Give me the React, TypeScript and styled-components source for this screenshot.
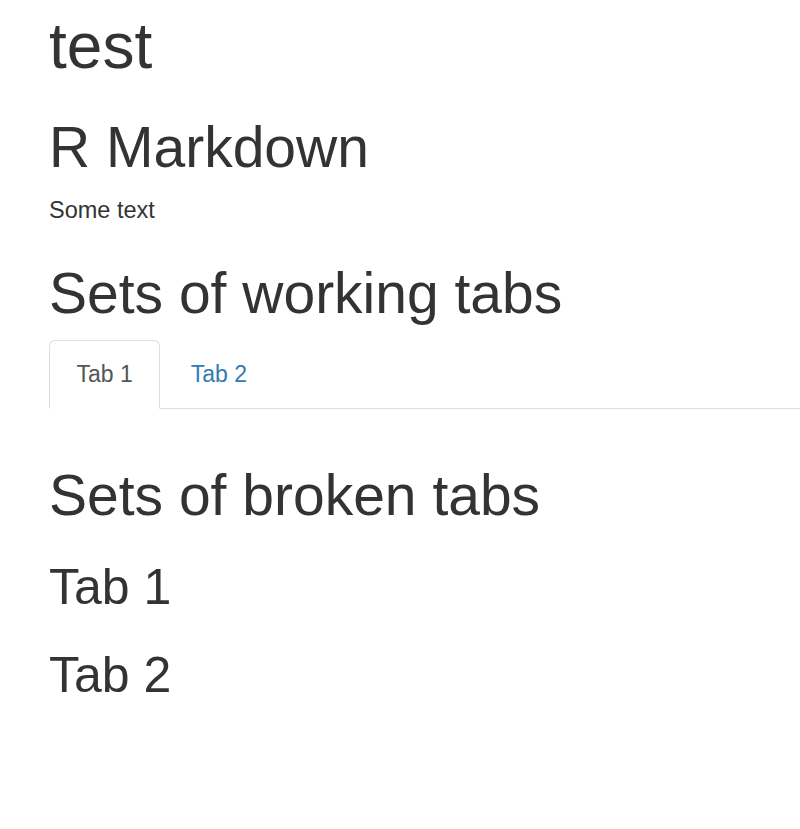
import styled, { createGlobalStyle } from "styled-components";

const GlobalStyle = createGlobalStyle`
  html, body {
    margin: 0;
    padding: 0;
    background: #fff;
  }

  body {
    font-family: "Liberation Sans", Arial, Helvetica, sans-serif;
    color: #333;
  }
`;

const Page = styled.main`
  display: flex;
  flex-direction: column;
  padding: 11px 0 0 49px;
`;

const Title = styled.h1`
  margin: 0;
  font-size: 64px;
  line-height: 70px;
  font-weight: 400;
`;

const SectionTitle = styled.h2<{ $gap: number }>`
  margin: ${(p) => p.$gap}px 0 0;
  font-size: 57px;
  line-height: 63px;
  font-weight: 400;
`;

const SubTitle = styled.h3`
  margin: 32px 0 0;
  font-size: 50px;
  line-height: 56px;
  font-weight: 400;
`;

const Paragraph = styled.p`
  margin: 15px 0 0;
  font-size: 23.5px;
  line-height: 33px;
`;

const TabList = styled.ul`
  display: flex;
  margin: 15px 0 0;
  padding: 0;
  list-style: none;
  border-bottom: 1px solid #ddd;
`;

const TabItem = styled.li`
  margin: 0 3px -1px 0;
`;

const TabLink = styled.a<{ $active?: boolean }>`
  display: block;
  padding: 17px 26.5px;
  font-size: 23px;
  line-height: 33px;
  text-decoration: none;
  cursor: pointer;
  border: 1px solid ${(p) => (p.$active ? "#ddd" : "transparent")};
  border-bottom-color: ${(p) => (p.$active ? "#fff" : "transparent")};
  border-radius: 6px 6px 0 0;
  background: ${(p) => (p.$active ? "#fff" : "transparent")};
  color: ${(p) => (p.$active ? "#555" : "#337ab7")};
`;

const App = () => {
  const tabs = [
    { title: "Tab 1", active: true },
    { title: "Tab 2", active: false },
  ];

  return (
    <>
      <GlobalStyle />
      <Page>
        <Title>test</Title>

        <SectionTitle $gap={35}>R Markdown</SectionTitle>
        <Paragraph>Some text</Paragraph>

        <SectionTitle $gap={35}>Sets of working tabs</SectionTitle>
        <TabList>
          {tabs.map((tab) => (
            <TabItem key={tab.title}>
              <TabLink $active={tab.active}>{tab.title}</TabLink>
            </TabItem>
          ))}
        </TabList>

        <SectionTitle $gap={55}>Sets of broken tabs</SectionTitle>
        <SubTitle>Tab 1</SubTitle>
        <SubTitle>Tab 2</SubTitle>
      </Page>
    </>
  );
};

export default App;
